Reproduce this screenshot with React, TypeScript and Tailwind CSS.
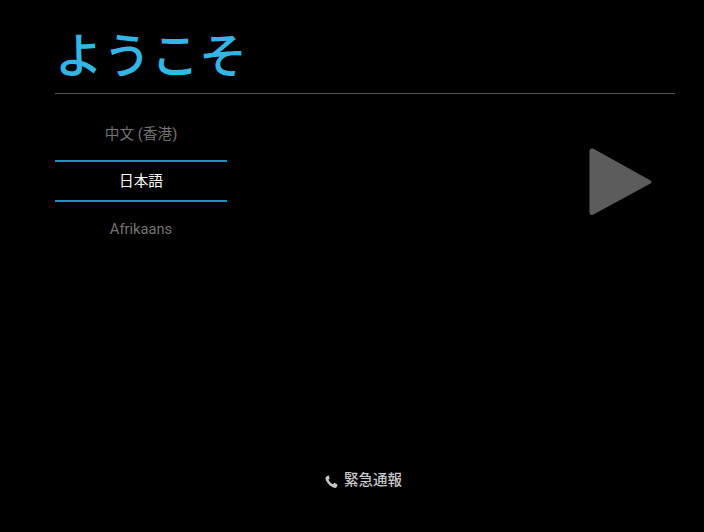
export default function App() {
  const jp = { fontFamily: 'Roboto, "Noto Sans CJK JP", sans-serif' };
  return (
    <main className="w-[704px] h-[532px] bg-black flex flex-col overflow-hidden" style={jp}>
      <div className="ml-[55px] mr-[29px] mt-[28px] h-[66px] border-b border-[#555555]">
        <h1 className="text-[48px] leading-[58px] font-medium text-[#33b5e5] whitespace-nowrap">ようこそ</h1>
      </div>

      <div className="flex-1 flex justify-between pl-[55px] pr-[51px]">
        <ul className="w-[172px] mt-[17px] text-[14.7px]">
          <li className="h-[51px] pb-[3px] flex items-center justify-center text-[#747474] border-b-2 border-[#1a94c0]">中文 (香港)</li>
          <li className="h-[40px] flex items-center justify-center text-white border-b-2 border-[#1a94c0]">日本語</li>
          <li className="h-[54px] flex items-center justify-center text-[#747474]">Afrikaans</li>
        </ul>

        <svg width="64" height="68" viewBox="0 0 64 68" className="mt-[54px]">
          <path
            d="M3 0.5 Q0.5 0.5 0.5 3.5 V64.5 Q0.5 67.5 3.5 67 L61.5 35.5 Q63.5 34 61.5 32.5 L4.5 0.8 Q3.8 0.5 3 0.5 Z"
            fill="#5c5c5c"
          />
        </svg>
      </div>

      <div className="h-[30px] mb-[36px] flex items-center justify-center gap-[5px] pl-[22px] text-[14.5px] font-medium text-[#c8c8c8]">
        <svg width="15" height="15" viewBox="0 0 24 24" fill="#c8c8c8">
          <path d="M6.6 2.5 3.4 4.2C2.3 5 2 6.5 2.6 8.2c1 3 2.9 6 5.3 8.4 2.6 2.6 5.6 4.6 8.3 5.4 1.6.5 3 .2 3.8-.9l1.5-2.7c.3-.6.1-1.2-.4-1.6l-3.6-2.4c-.6-.4-1.2-.3-1.7.2l-1.4 1.6c-1.6-.6-3.2-1.8-4.6-3.2-1.3-1.3-2.3-2.8-2.9-4.2L8.6 8.4c.5-.5.6-1.1.3-1.7L7.9 3c-.2-.5-.8-.8-1.3-.5Z" />
        </svg>
        <span>緊急通報</span>
      </div>
    </main>
  );
}
